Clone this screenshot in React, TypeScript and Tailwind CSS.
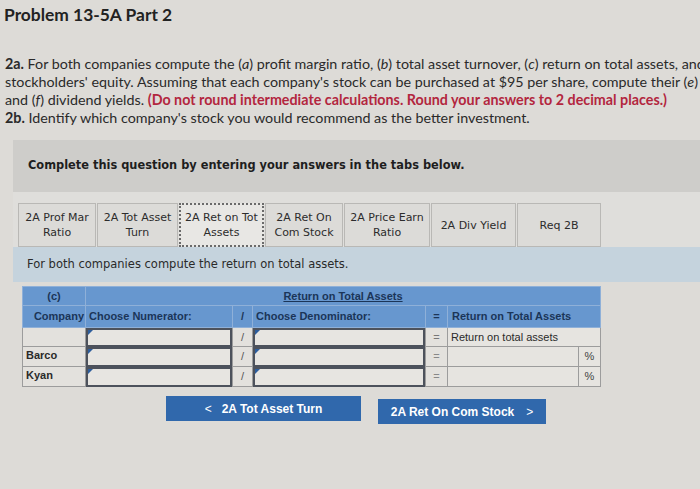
import React from "react";

const tabs = [
  { l1: "2A Prof Mar", l2: "Ratio", w: "w-[78px]" },
  { l1: "2A Tot Asset", l2: "Turn", w: "w-[81px]" },
  { l1: "2A Ret on Tot", l2: "Assets", w: "w-[85px]", active: true },
  { l1: "2A Ret On", l2: "Com Stock", w: "w-[78px]" },
  { l1: "2A Price Earn", l2: "Ratio", w: "w-[86px]" },
  { l1: "2A Div Yield", l2: "", w: "w-[85px]" },
  { l1: "Req 2B", l2: "", w: "w-[84px]" },
];

function Inp() {
  return (
    <div className="relative h-full border-2 border-[#4d525c] bg-[#e7e5e1]">
      <span className="absolute left-0 top-0 w-0 h-0 border-t-[5px] border-r-[5px] border-t-[#2d5d9c] border-r-transparent" />
    </div>
  );
}

export default function App() {
  const body = "font-['Lato',sans-serif]";
  const dv = "font-['DejaVu_Sans',sans-serif]";
  const ar = "font-['Liberation_Sans',Arial,sans-serif]";
  return (
    <div className="w-[700px] h-[489px] overflow-hidden bg-[#dddbd7] text-[#262626]">
      <div className={`${body} pl-[4px] pt-[4px] text-[17.4px] leading-[22px] font-bold text-[#222]`}>
        Problem 13-5A Part 2
      </div>
      <div className={`${body} mt-[29px] pl-[5px] text-[14.3px] leading-[18px] text-[#2a2a2a]`}>
        <div className="whitespace-nowrap">
          <b>2a.</b> For both companies compute the (<i>a</i>) profit margin ratio, (<i>b</i>) total asset turnover, (<i>c</i>) return on total assets, and (<i>d</i>) return on common
        </div>
        <div className="whitespace-nowrap">
          stockholders' equity. Assuming that each company's stock can be purchased at $95 per share, compute their (<i>e</i>) price-earnings ratios
        </div>
        <div className="whitespace-nowrap">
          and (<i>f</i>) dividend yields. <b className="text-[#b3263e]">(Do not round intermediate calculations. Round your answers to 2 decimal places.)</b>
        </div>
        <div className="whitespace-nowrap">
          <b>2b.</b> Identify which company's stock you would recommend as the better investment.
        </div>
      </div>

      <div className="ml-[13px] mt-[13px] w-[700px]">
        <div className={`${dv} h-[52px] bg-[#cecdca] flex items-center pl-[15px] text-[11.4px] font-bold text-[#1e1e1e]`}>
          Complete this question by entering your answers in the tabs below.
        </div>
        <div className="bg-[#dfdedb] pt-[11px]">
          <div className={`${dv} flex gap-[1px] pl-[5px] text-[11px] leading-[15px] text-[#2c2c2c]`}>
            {tabs.map((t, i) => (
              <div
                key={i}
                className={`${t.w} h-[44px] flex flex-col items-center justify-center text-center ${
                  t.active
                    ? "border-2 border-dotted border-[#6a6a6a] bg-[#e8e7e4]"
                    : "border border-[#b9b8b5] bg-[#dcdbd8]"
                }`}
              >
                <span>{t.l1}</span>
                {t.l2 && <span>{t.l2}</span>}
              </div>
            ))}
          </div>
          <div className={`${dv} h-[35px] bg-[#c5d3dd] flex items-center pl-[14px] text-[11.5px] text-[#2a2a2a]`}>
            For both companies compute the return on total assets.
          </div>
        </div>
      </div>

      <div className="ml-[22px] mt-[4px]">
        <table className={`${ar} border-collapse table-fixed text-[11px] w-[578px]`}>
          <colgroup>
            <col className="w-[63px]" />
            <col className="w-[147px]" />
            <col className="w-[20px]" />
            <col className="w-[173px]" />
            <col className="w-[22px]" />
            <col className="w-[131px]" />
            <col className="w-[22px]" />
          </colgroup>
          <tbody>
            <tr className="h-[19px] bg-[#6797cf] text-[#1b3558] font-bold">
              <td className="border border-[#8fb0d8] text-center">(c)</td>
              <td colSpan={6} className="border border-[#8fb0d8] text-center underline">
                Return on Total Assets
              </td>
            </tr>
            <tr className="h-[22px] bg-[#6797cf] text-[#1b3558] font-bold">
              <td className="border border-[#8fb0d8] text-right pr-[1px]">Company</td>
              <td className="border border-[#8fb0d8] pl-[3px]">Choose Numerator:</td>
              <td className="border border-[#8fb0d8] text-center">/</td>
              <td className="border border-[#8fb0d8] pl-[3px]">Choose Denominator:</td>
              <td className="border border-[#8fb0d8] text-center">=</td>
              <td colSpan={2} className="border border-[#8fb0d8] pl-[4px]">Return on Total Assets</td>
            </tr>
            <tr className="h-[19px] text-[#2a2a2a]">
              <td className="border border-[#9c9c9c] bg-[#e3e1dd]"></td>
              <td className="p-0 h-[19px]"><Inp /></td>
              <td className="border border-[#9c9c9c] bg-[#e3e1dd] text-center text-[#555]">/</td>
              <td className="p-0 h-[19px]"><Inp /></td>
              <td className="border border-[#9c9c9c] bg-[#e3e1dd] text-center text-[#777]">=</td>
              <td colSpan={2} className="border border-[#9c9c9c] bg-[#e6e4e0] pl-[3px]">Return on total assets</td>
            </tr>
            {["Barco", "Kyan"].map((n) => (
              <tr key={n} className="h-[20px] text-[#2a2a2a]">
                <td className="border border-[#9c9c9c] bg-[#e3e1dd] font-bold pl-[3px] align-top">{n}</td>
                <td className="p-0 h-[20px]"><Inp /></td>
                <td className="border border-[#9c9c9c] bg-[#e3e1dd] text-center text-[#555]">/</td>
                <td className="p-0 h-[20px]"><Inp /></td>
                <td className="border border-[#9c9c9c] bg-[#e3e1dd] text-center text-[#888]">=</td>
                <td className="border border-[#9c9c9c] bg-[#e6e4e0]"></td>
                <td className="border border-[#9c9c9c] bg-[#e6e4e0] text-center text-[#444]">%</td>
              </tr>
            ))}
          </tbody>
        </table>
      </div>

      <div className={`${ar} flex mt-[9px] pl-[166px] gap-[17px] text-[12px] font-bold text-white`}>
        <div className="w-[195px] h-[25px] bg-[#3068ac] flex items-center justify-center gap-[10px]">
          <span className="font-normal">&lt;</span>
          <span>2A Tot Asset Turn</span>
        </div>
        <div className="w-[168px] h-[25px] mt-[3px] bg-[#3068ac] flex items-center justify-center gap-[12px]">
          <span>2A Ret On Com Stock</span>
          <span className="font-normal">&gt;</span>
        </div>
      </div>
    </div>
  );
}
